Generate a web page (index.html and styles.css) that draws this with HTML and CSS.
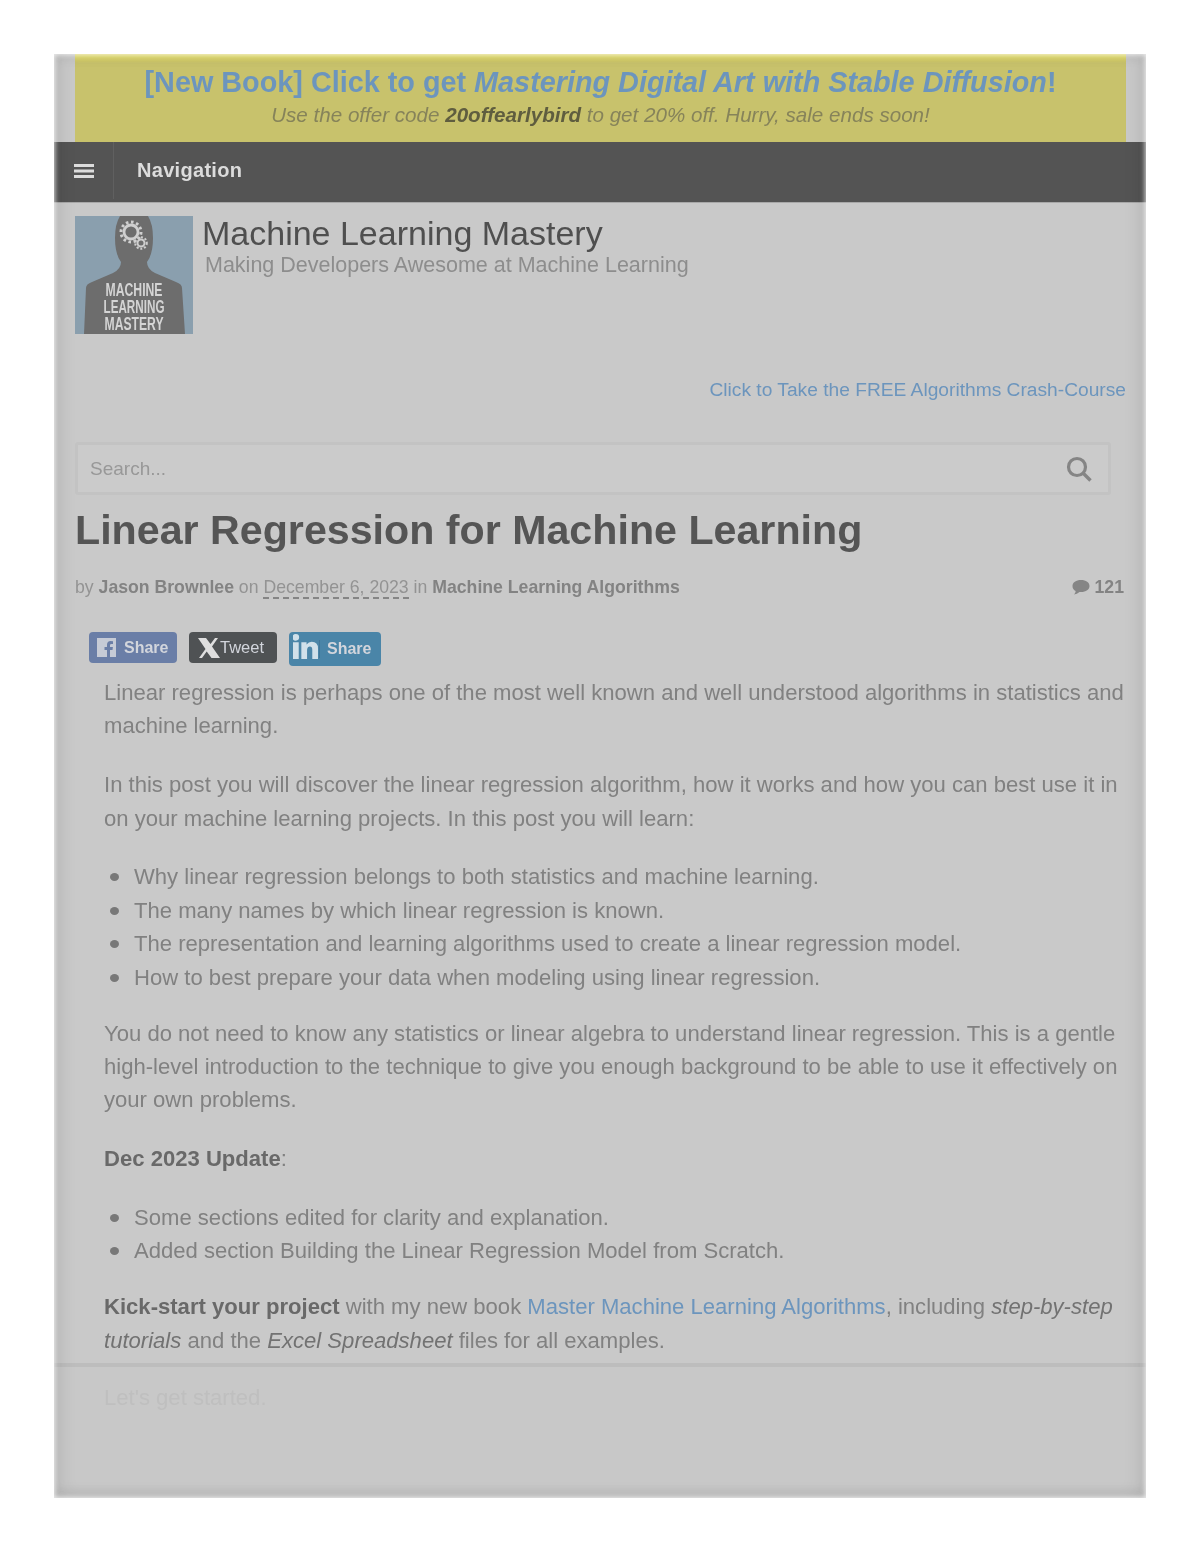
FILE: index.html
```html
<!DOCTYPE html>
<html lang="en">
<head>
<meta charset="utf-8">
<title>Linear Regression for Machine Learning</title>
<link rel="stylesheet" href="styles.css">
</head>
<body>
<div class="shell">
  <div class="banner">
    <div class="banner-main"><a class="banner-link">[New Book] Click to get <em>Mastering Digital Art with Stable Diffusion</em>!</a></div>
    <div class="banner-sub"><em>Use the offer code <strong>20offearlybird</strong> to get 20% off. Hurry, sale ends soon!</em></div>
  </div>
  <nav class="nav">
    <div class="nav-toggle">
      <svg class="nav-icon" viewBox="0 0 20 16" width="20" height="16"><path d="M0 1h20v3H0zM0 6.500h20v3H0zM0 12h20v3H0z" fill="#dcdcdc"/></svg>
    </div>
    <div class="nav-label">Navigation</div>
  </nav>
  <div class="content">
    <header class="brand">
      <svg class="logo" viewBox="0 0 118 118" width="118" height="118">
        <rect width="118" height="118" fill="#8a9fae"/>
        <path d="M9 118l2-46q0-4 6-6l21-9q8-4 8-11-6-8-6-24 0-14 5-22h28q5 8 5 22 0 16-6 24 0 7 8 11l21 9q6 2 6 6l3 46z" fill="#6d6d6d"/>
        <g fill="none" stroke="#cfcfcf">
          <circle cx="56" cy="16" r="7" stroke-width="2.800"/>
          <circle cx="56" cy="16" r="10" stroke-width="3" stroke-dasharray="2.600 2.600"/>
          <circle cx="66" cy="27" r="3.500" stroke-width="2"/>
          <circle cx="66" cy="27" r="5.800" stroke-width="2" stroke-dasharray="2 1.800"/>
        </g>
        <g class="logo-text" text-anchor="middle">
          <text x="59" y="80" textLength="57" lengthAdjust="spacingAndGlyphs">MACHINE</text>
          <text x="59" y="97" textLength="61" lengthAdjust="spacingAndGlyphs">LEARNING</text>
          <text x="59" y="114" textLength="59" lengthAdjust="spacingAndGlyphs">MASTERY</text>
        </g>
      </svg>
      <div class="brand-text">
        <div class="brand-title">Machine Learning Mastery</div>
        <div class="brand-tag">Making Developers Awesome at Machine Learning</div>
      </div>
    </header>
    <div class="promo"><a class="link">Click to Take the FREE Algorithms Crash-Course</a></div>
    <div class="search">
      <span class="search-text">Search...</span>
      <svg class="search-icon" viewBox="0 0 26 26" width="26" height="26"><circle cx="11" cy="11" r="8.500" fill="none" stroke="#858585" stroke-width="3.200"/><path d="M17 17l7.500 7.500" stroke="#858585" stroke-width="3.400" fill="none"/></svg>
    </div>
    <h1 class="title">Linear Regression for Machine Learning</h1>
    <div class="meta">
      <div>by <strong>Jason Brownlee</strong> on <span class="date">December 6, 2023</span> in <strong>Machine Learning Algorithms</strong></div>
      <div class="comments">
        <svg viewBox="0 0 18 16" width="18" height="16"><path d="M9 1c5 0 8.500 2.500 8.500 6S14 13 9 13H7.500Q5 15 2 15.500q1.500-1.500 1.700-3.500Q.5 10.500.5 7C.5 3.500 4 1 9 1z" fill="#858585"/></svg>
        <strong>121</strong>
      </div>
    </div>
    <div class="shares">
      <a class="share share-fb">
        <svg viewBox="0 0 19 19" width="19" height="19"><path d="M0 0h19v19h-6v-7h2.500l.4-3H13V7.300q0-1.300 1.400-1.300H16V3.300Q15 3 13.700 3 10 3 10 6.800V9H7.500v3H10v7H0z" fill="#c6cbd6"/></svg>
        <span>Share</span>
      </a>
      <a class="share share-x">
        <svg viewBox="0 0 22 20" width="22" height="20"><path d="M0 0h8l4.500 6L17 0h3l-6 8.500L22 20h-8.500l-4.800-6.500L4 20H1l6.500-9z" fill="#dedede"/></svg>
        <span>Tweet</span>
      </a>
      <a class="share share-in">
        <svg class="in-icon" viewBox="0 0 24 24" width="25" height="25"><path d="M0 8h5.500v16H0zM2.700 0a3.200 3.200 0 1 1 0 6.400 3.200 3.200 0 0 1 0-6.400zM8 8h5v2q2-2.500 5-2.500 6 0 6 6.500v10h-5.500v-9q0-3-2.300-3T13.500 15v9H8z" fill="#d0e0ea"/></svg>
        <span class="in-label">Share</span>
      </a>
    </div>
    <article class="article">
      <p>Linear regression is perhaps one of the most well known and well understood algorithms in statistics and machine learning.</p>
      <p>In this post you will discover the linear regression algorithm, how it works and how you can best use it in on your machine learning projects. In this post you will learn:</p>
      <ul>
        <li>Why linear regression belongs to both statistics and machine learning.</li>
        <li>The many names by which linear regression is known.</li>
        <li>The representation and learning algorithms used to create a linear regression model.</li>
        <li>How to best prepare your data when modeling using linear regression.</li>
      </ul>
      <p>You do not need to know any statistics or linear algebra to understand linear regression. This is a gentle high-level introduction to the technique to give you enough background to be able to use it effectively on your own problems.</p>
      <p><strong>Dec 2023 Update</strong>:</p>
      <ul>
        <li>Some sections edited for clarity and explanation.</li>
        <li>Added section Building the Linear Regression Model from Scratch.</li>
      </ul>
      <p class="kick"><strong>Kick-start your project</strong> with my new book <a class="link">Master Machine Learning Algorithms</a>, including <em>step-by-step tutorials</em> and the <em>Excel Spreadsheet</em> files for all examples.</p>
      <p>Let's get started.</p>
    </article>
  </div>
  <div class="cover"></div>
  <div class="vignette"></div>
</div>
</body>
</html>
```

FILE: styles.css
```css
html, body {
  margin: 0;
  background: #fff;
}
body {
  padding: 54px;
  height: 1553px;
  box-sizing: border-box;
  font-family: "Liberation Sans", Arial, sans-serif;
}
.shell {
  position: relative;
  height: 1444px;
  overflow: hidden;
  background: #c9c9c9;
  color: #818181;
  filter: blur(0.45px);
}
.banner {
  margin: 0 20px 0 21px;
  height: 88px;
  box-sizing: border-box;
  padding-top: 10px;
  text-align: center;
  background: linear-gradient(#e8df60 0, #e0d964 3px, #c8c26c 9px);
}
.banner-main {
  font-size: 28.8px;
  line-height: 37px;
  font-weight: 700;
  color: #6c95bd;
}
.banner-sub {
  font-size: 20.6px;
  line-height: 28px;
  color: #86835a;
}
.banner-sub strong { color: #5f5d3f; }
.nav {
  display: flex;
  align-items: center;
  height: 61px;
  padding-bottom: 3px;
  background: #545454;
  color: #dcdcdc;
  border-bottom: 1px solid #a8a8a8;
  box-sizing: border-box;
}
.nav-toggle {
  display: flex;
  align-items: center;
  justify-content: center;
  width: 60px;
  height: 100%;
  border-right: 1px solid #606060;
  box-sizing: border-box;
}
.nav-label {
  margin-left: 23px;
  font-size: 20px;
  font-weight: 700;
  letter-spacing: 0.3px;
}
.content {
  padding: 13px 20px 0 21px;
}
.brand {
  display: flex;
  gap: 9px;
  height: 118px;
}
.logo { flex: none; }
.logo-text {
  font-family: "Liberation Sans", Arial, sans-serif;
  font-weight: 700;
  font-size: 19px;
  fill: #d4d4d4;
}
.brand-title {
  font-size: 34px;
  line-height: 34px;
  color: #4f4f4f;
}
.brand-tag {
  margin-left: 3px;
  font-size: 21.5px;
  line-height: 30px;
  color: #8d8d8d;
}
.promo {
  margin-top: 44px;
  height: 24px;
  line-height: 24px;
  font-size: 19.2px;
  text-align: right;
}
.link { color: #6c95bd; }
.search {
  display: flex;
  align-items: center;
  justify-content: space-between;
  box-sizing: border-box;
  width: 1036px;
  height: 53px;
  margin-top: 40px;
  padding: 0 16px 0 12px;
  background: #cbcbcb;
  border: 3px solid #c3c3c3;
  border-radius: 3px;
  font-size: 19px;
  color: #989898;
}
.title {
  margin: 9px 0 0;
  font-size: 41.2px;
  line-height: 52px;
  font-weight: 700;
  color: #555;
}
.meta {
  display: flex;
  justify-content: space-between;
  margin-top: 18px;
  font-size: 17.66px;
  line-height: 26px;
  color: #939393;
}
.meta strong { color: #838383; }
.date { border-bottom: 2px dashed #858585; }
.comments {
  display: flex;
  align-items: center;
  gap: 5px;
  padding-right: 2px;
}
.shares {
  display: flex;
  align-items: flex-start;
  gap: 12px;
  margin-top: 32px;
  padding-left: 14px;
}
.share {
  display: flex;
  align-items: center;
  height: 31px;
  box-sizing: border-box;
  border-radius: 4px;
  font-size: 16px;
  font-weight: 700;
  color: #d2d5dc;
}
.share-fb {
  width: 88px;
  padding-left: 8px;
  gap: 8px;
  background: #6a7ea7;
}
.share-x {
  width: 88px;
  padding-left: 9px;
  background: #4f5254;
  font-weight: 400;
  font-size: 16.5px;
}
.share-in {
  width: 92px;
  height: 34px;
  padding-left: 4px;
  gap: 1px;
  background: #4a85a8;
}
.in-icon { margin-top: -6px; }
.in-label {
  padding-left: 7px;
  border-left: 1px solid #3f7699;
}
.article {
  padding-left: 29px;
  margin-top: 10px;
  font-size: 22.08px;
  line-height: 33.4px;
}
.article p { margin: 0 0 25.4px; }
.article p.kick { margin-bottom: 23.6px; }
.article ul {
  margin: 0 0 22.6px;
  padding-left: 30px;
  list-style: none;
}
.article li { position: relative; }
.article li::before {
  content: "";
  position: absolute;
  left: -24px;
  top: 13px;
  width: 9px;
  height: 8px;
  border-radius: 50%;
  background: #787878;
}
.article em { color: #727272; }
.article strong { color: #696969; }
.cover {
  position: absolute;
  left: 0;
  right: 0;
  bottom: 0;
  height: 135px;
  box-sizing: border-box;
  border-top: 4px solid #bdbdbd;
  background: rgba(199, 199, 199, 0.88);
}
.vignette {
  position: absolute;
  inset: 0;
  pointer-events: none;
  box-shadow:
    inset 0 0 5px 1px rgba(255, 255, 255, 0.8),
    inset 8px 0 18px -2px rgba(0, 0, 0, 0.09),
    inset -8px 0 18px -2px rgba(0, 0, 0, 0.09),
    inset 0 -8px 16px -4px rgba(0, 0, 0, 0.06);
}
```
